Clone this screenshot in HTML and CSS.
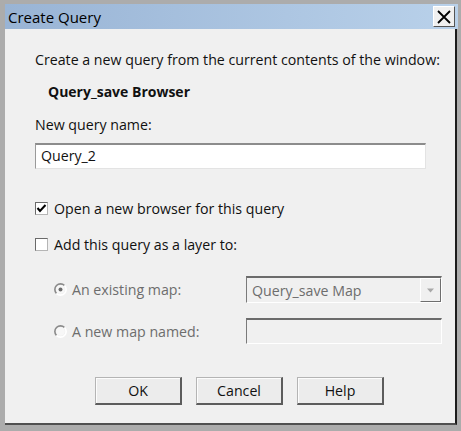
FILE: index.html
```html
<!DOCTYPE html>
<html>
<head>
<meta charset="utf-8">
<link rel="stylesheet" href="styles.css">
</head>
<body>
<div class="frame">
  <div class="titlebar">
    <span class="title">Create Query</span>
    <div class="close"><svg width="16" height="16" viewBox="0 0 16 16"><path d="M2 2 L14 14 M14 2 L2 14" stroke="#000" stroke-width="1.8" fill="none"/></svg></div>
  </div>
  <div class="content">
    <div class="line intro">Create a new query from the current contents of the window:</div>
    <div class="line source">Query_save Browser</div>
    <div class="line namelabel">New query name:</div>
    <div class="textbox">Query_2</div>
    <div class="check check1">
      <span class="box"><svg width="11" height="11" viewBox="0 0 11 11"><path d="M1.5 5 L4 8 L9.5 2" stroke="#000" stroke-width="2" fill="none"/></svg></span>
      <span>Open a new browser for this query</span>
    </div>
    <div class="check check2">
      <span class="box"></span>
      <span>Add this query as a layer to:</span>
    </div>
    <div class="optrow opt1">
      <div class="radio">
        <svg width="13" height="13" viewBox="0 0 13 13"><path d="M10.5 2.5 A5.5 5.5 0 0 0 2.5 10.5" stroke="#8a8a8a" stroke-width="1.6" fill="none"/><path d="M2.5 10.5 A5.5 5.5 0 0 0 10.5 2.5" stroke="#ffffff" stroke-width="1.6" fill="none"/><circle cx="6.5" cy="6.5" r="4.2" fill="#f7f7f7"/><circle cx="6.5" cy="6.5" r="2" fill="#6d6d6d"/></svg>
        <span>An existing map:</span>
      </div>
      <div class="select"><span>Query_save Map</span><span class="arrow"><svg width="9" height="5" viewBox="0 0 9 5"><path d="M1 0.5 L8 0.5 L4.5 4.5 Z" fill="#a8a8a8"/></svg></span></div>
    </div>
    <div class="optrow opt2">
      <div class="radio">
        <svg width="13" height="13" viewBox="0 0 13 13"><path d="M10.5 2.5 A5.5 5.5 0 0 0 2.5 10.5" stroke="#8a8a8a" stroke-width="1.6" fill="none"/><path d="M2.5 10.5 A5.5 5.5 0 0 0 10.5 2.5" stroke="#ffffff" stroke-width="1.6" fill="none"/><circle cx="6.5" cy="6.5" r="4.2" fill="#f7f7f7"/></svg>
        <span>A new map named:</span>
      </div>
      <div class="field"></div>
    </div>
    <div class="buttons">
      <div class="btn">OK</div>
      <div class="btn">Cancel</div>
      <div class="btn">Help</div>
    </div>
  </div>
</div>
</body>
</html>
```
FILE: styles.css
```css
html, body {
  margin: 0;
  padding: 0;
  background: #acacac;
}
body {
  width: 461px;
  height: 431px;
  overflow: hidden;
  font-family: "Open Sans", "Noto Sans", sans-serif;
  font-size: 14.2px;
  color: #111;
}
.frame {
  padding: 4px 4px 6px 5px;
  height: 431px;
  box-sizing: border-box;
  display: flex;
  flex-direction: column;
}
.titlebar {
  height: 25px;
  background: linear-gradient(to right, #99b4d5, #b9d1ea);
  display: flex;
  align-items: center;
  justify-content: space-between;
  padding-left: 3px;
  padding-right: 3px;
  margin-right: -1px;
}
.title {
  font-size: 15px;
  color: #000;
}
.close {
  width: 22px;
  height: 21px;
  background: #f0f0f0;
  border: 1px solid #fff;
  border-right-color: #555;
  border-bottom-color: #555;
  box-sizing: border-box;
  display: flex;
  align-items: center;
  justify-content: center;
}
.content {
  flex: 1;
  background: #f0f0f0;
  border-right: 2px solid #1c1c1c;
  border-bottom: 2px solid #505050;
  padding: 21px 0 0 30px;
  display: flex;
  flex-direction: column;
}
.line {
  height: 20px;
  line-height: 20px;
  white-space: nowrap;
}
.source {
  margin-top: 12px;
  padding-left: 13px;
  font-weight: bold;
  font-size: 14px;
}
.namelabel {
  margin-top: 13px;
}
.textbox {
  margin-top: 8px;
  width: 391px;
  height: 26px;
  box-sizing: border-box;
  background: #fff;
  border-top: 2px solid #8c8c8c;
  border-left: 1px solid #9a9a9a;
  border-right: 1px solid #e3e3e3;
  border-bottom: 1px solid #e3e3e3;
  padding-left: 5px;
  line-height: 22px;
}
.check {
  height: 20px;
  display: flex;
  align-items: center;
  gap: 6px;
}
.check1 { margin-top: 29px; }
.check2 { margin-top: 16px; }
.box {
  width: 13px;
  height: 13px;
  box-sizing: border-box;
  background: #fff;
  border: 1px solid #6a6a6a;
  border-right-color: #b5b5b5;
  border-bottom-color: #b5b5b5;
  display: flex;
  align-items: center;
  justify-content: center;
}
.optrow {
  display: flex;
  align-items: center;
  padding-left: 19px;
}
.opt1 { margin-top: 22px; height: 27px; }
.opt2 { margin-top: 15px; height: 26px; }
.radio {
  width: 192px;
  display: flex;
  align-items: center;
  gap: 5px;
  color: #6d6d6d;
}
.select {
  width: 196px;
  height: 27px;
  box-sizing: border-box;
  border-top: 2px solid #6b6b6b;
  border-left: 1px solid #7a7a7a;
  border-right: 1px solid #fff;
  border-bottom: 1px solid #fff;
  display: flex;
  align-items: center;
  justify-content: space-between;
  padding-left: 5px;
  color: #6d6d6d;
}
.arrow {
  width: 21px;
  height: 24px;
  box-sizing: border-box;
  border: 1px solid #fff;
  border-right-color: #6e6e6e;
  border-bottom-color: #6e6e6e;
  display: flex;
  align-items: center;
  justify-content: center;
}
.field {
  width: 196px;
  height: 26px;
  box-sizing: border-box;
  border-top: 2px solid #6b6b6b;
  border-left: 1px solid #7a7a7a;
  border-right: 1px solid #fff;
  border-bottom: 1px solid #fff;
}
.buttons {
  margin-top: 33px;
  padding-left: 60px;
  display: flex;
  gap: 14px;
}
.btn {
  width: 87px;
  height: 28px;
  box-sizing: border-box;
  background: #ececec;
  border: 1px solid #b4b4b4;
  border-right: 2px solid #5c5c5c;
  border-bottom: 2px solid #5c5c5c;
  box-shadow: inset 1px 1px 0 #fcfcfc;
  display: flex;
  align-items: center;
  justify-content: center;
}
```
